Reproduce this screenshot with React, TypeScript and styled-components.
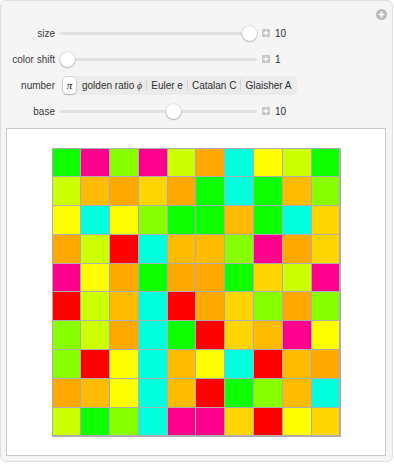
import React from "react";
import styled, { createGlobalStyle } from "styled-components";

const Global = createGlobalStyle`
  html, body { margin: 0; padding: 0; background: #ffffff; }
  body { font-family: "Liberation Sans", Arial, sans-serif; }
  * { box-sizing: border-box; }
`;

const Panel = styled.div`
  position: relative;
  width: 393px;
  height: 462px;
  background: #f5f5f5;
  border: 1px solid #dedede;
  border-radius: 6px;
  padding: 22px 6px 5px 5px;
  display: flex;
  flex-direction: column;
`;

const CornerPlus = styled.div`
  position: absolute;
  top: 8px;
  right: 5px;
  width: 11px;
  height: 11px;
  border-radius: 50%;
  background: #b9b9b9;
  display: flex;
  align-items: center;
  justify-content: center;
`;

const Controls = styled.div`
  display: flex;
  flex-direction: column;
  gap: 6px;
`;

const Row = styled.div`
  display: flex;
  align-items: center;
  height: 20px;
`;

const Label = styled.div<{ $gap: number }>`
  width: 49px;
  margin-right: ${(p) => p.$gap}px;
  text-align: right;
  font-size: 10px;
  color: #3a3a3a;
  white-space: nowrap;
`;

const Track = styled.div`
  position: relative;
  width: 197px;
  height: 3px;
  border-radius: 2px;
  background: #e1e1e1;
`;

const Thumb = styled.div`
  position: absolute;
  top: 50%;
  width: 15px;
  height: 15px;
  margin-left: -7.5px;
  margin-top: -7.5px;
  border-radius: 50%;
  background: #ffffff;
  box-shadow: 0 0 0 0.5px rgba(0, 0, 0, 0.14), 0 1px 2px rgba(0, 0, 0, 0.22);
`;

const SmallPlus = styled.div`
  width: 8px;
  height: 8px;
  margin-left: 5px;
  border-radius: 1px;
  background: #c6c6c6;
  display: flex;
  align-items: center;
  justify-content: center;
`;

const Value = styled.div`
  margin-left: 5px;
  font-size: 10px;
  color: #2a2a2a;
`;

const Segmented = styled.div`
  display: flex;
  align-items: center;
  height: 19px;
  padding: 1px;
  border-radius: 5px;
  background: #ebebeb;
`;

const SelectedSeg = styled.div`
  width: 13px;
  height: 17px;
  border-radius: 4px;
  background: #ffffff;
  box-shadow: 0 0 0 0.5px rgba(0, 0, 0, 0.18), 0 1px 1.5px rgba(0, 0, 0, 0.18);
  display: flex;
  align-items: center;
  justify-content: center;
  font-family: "Liberation Serif", "Times New Roman", serif;
  font-style: italic;
  font-size: 11px;
  color: #222;
`;

const Seg = styled.div<{ $first?: boolean }>`
  padding: 0 4px 0 ${(p) => (p.$first ? 6 : 4)}px;
  font-size: 10px;
  color: #2f2f2f;
  white-space: nowrap;
`;

const Sep = styled.div`
  width: 1px;
  height: 12px;
  background: #d2d2d2;
`;

const Phi = styled.i`
  font-family: "Liberation Serif", "DejaVu Serif", serif;
`;

const Output = styled.div`
  margin-top: 7px;
  width: 380px;
  height: 328px;
  background: #ffffff;
  border: 1px solid #c9c9c9;
  display: flex;
  align-items: center;
  justify-content: center;
`;

const Grid = styled.div`
  width: 289px;
  height: 289px;
  display: grid;
  grid-template-columns: repeat(10, 1fr);
  grid-template-rows: repeat(10, 1fr);
  gap: 1px;
  padding: 1px;
  background: #adadad;
`;

const Cell = styled.div<{ $c: string }>`
  background: ${(p) => p.$c};
`;

const DIGITS =
  "3141592653589793238462643383279502884197169399375105820974944592307816406286208998628034825342117067";

const COLORS: Record<string, string> = {
  "0": "#ff0000",
  "1": "#ff008c",
  "2": "#00ffdd",
  "3": "#0dff00",
  "4": "#88ff00",
  "5": "#ccff00",
  "6": "#ffff00",
  "7": "#ffd500",
  "8": "#ffbb00",
  "9": "#ffa800",
};

const PlusGlyph = ({ size, stroke }: { size: number; stroke: number }) => (
  <svg width={size} height={size} viewBox="0 0 10 10">
    <path d="M5 1.8V8.2M1.8 5H8.2" stroke="#ffffff" strokeWidth={stroke} />
  </svg>
);

const Slider = ({ label, frac, value }: { label: string; frac: number; value: string }) => (
  <Row>
    <Label $gap={5}>{label}</Label>
    <Track>
      <Thumb style={{ left: `${7.5 + frac * 182}px` }} />
    </Track>
    <SmallPlus>
      <PlusGlyph size={8} stroke={1.6} />
    </SmallPlus>
    <Value>{value}</Value>
  </Row>
);

export default function App() {
  return (
    <>
      <Global />
      <Panel>
        <CornerPlus>
          <PlusGlyph size={9} stroke={1.8} />
        </CornerPlus>
        <Controls>
          <Slider label="size" frac={1} value="10" />
          <Slider label="color shift" frac={0} value="1" />
          <Row>
            <Label $gap={7}>number</Label>
            <Segmented>
              <SelectedSeg>π</SelectedSeg>
              <Seg $first>
                golden ratio <Phi>ϕ</Phi>
              </Seg>
              <Sep />
              <Seg>Euler e</Seg>
              <Sep />
              <Seg>Catalan C</Seg>
              <Sep />
              <Seg>Glaisher A</Seg>
            </Segmented>
          </Row>
          <Slider label="base" frac={0.58} value="10" />
        </Controls>
        <Output>
          <Grid>
            {DIGITS.split("").map((d, i) => (
              <Cell key={i} $c={COLORS[d]} />
            ))}
          </Grid>
        </Output>
      </Panel>
    </>
  );
}
